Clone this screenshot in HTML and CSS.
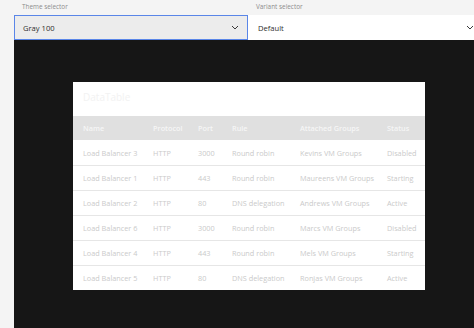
FILE: index.html
```html
<!DOCTYPE html>
<html>
<head>
<meta charset="utf-8">
<link rel="stylesheet" href="styles.css">
</head>
<body>
<div class="controls">
  <div class="field field-theme">
    <label class="label">Theme selector</label>
    <div class="select select-theme">
      <span class="select-value">Gray 100</span>
      <svg class="chev" width="8" height="5" viewBox="0 0 8 5"><path d="M1 1 L4 4 L7 1" fill="none" stroke="#393939" stroke-width="1"/></svg>
    </div>
  </div>
  <div class="field field-variant">
    <label class="label">Variant selector</label>
    <div class="select select-variant">
      <span class="select-value">Default</span>
      <svg class="chev" width="8" height="5" viewBox="0 0 8 5"><path d="M1 1 L4 4 L7 1" fill="none" stroke="#393939" stroke-width="1"/></svg>
    </div>
  </div>
</div>
<div class="stage">
  <div class="card">
    <div class="title">DataTable</div>
    <table class="table">
      <colgroup>
        <col class="c1"><col class="c2"><col class="c3"><col class="c4"><col class="c5"><col class="c6">
      </colgroup>
      <thead>
        <tr><th>Name</th><th>Protocol</th><th>Port</th><th>Rule</th><th>Attached Groups</th><th>Status</th></tr>
      </thead>
      <tbody>
        <tr><td>Load Balancer 3</td><td>HTTP</td><td>3000</td><td>Round robin</td><td>Kevins VM Groups</td><td>Disabled</td></tr>
        <tr><td>Load Balancer 1</td><td>HTTP</td><td>443</td><td>Round robin</td><td>Maureens VM Groups</td><td>Starting</td></tr>
        <tr><td>Load Balancer 2</td><td>HTTP</td><td>80</td><td>DNS delegation</td><td>Andrews VM Groups</td><td>Active</td></tr>
        <tr><td>Load Balancer 6</td><td>HTTP</td><td>3000</td><td>Round robin</td><td>Marcs VM Groups</td><td>Disabled</td></tr>
        <tr><td>Load Balancer 4</td><td>HTTP</td><td>443</td><td>Round robin</td><td>Mels VM Groups</td><td>Starting</td></tr>
        <tr><td>Load Balancer 5</td><td>HTTP</td><td>80</td><td>DNS delegation</td><td>Ronjas VM Groups</td><td>Active</td></tr>
      </tbody>
    </table>
  </div>
</div>
</body>
</html>
```

FILE: styles.css
```css
html, body {
  margin: 0;
  padding: 0;
  background: #f4f4f4;
  font-family: "Open Sans", "Liberation Sans", sans-serif;
  overflow: hidden;
  width: 474px;
  height: 328px;
}

.controls {
  display: flex;
  padding-left: 14px;
}

.field {
  display: flex;
  flex-direction: column;
}

.field-theme {
  width: 234px;
}

.field-variant {
  flex: 1;
}

.label {
  display: block;
  height: 15px;
  line-height: 13px;
  font-size: 6.4px;
  color: #8d8d8d;
  padding-left: 8px;
}

.select {
  height: 25px;
  box-sizing: border-box;
  display: flex;
  align-items: center;
  justify-content: space-between;
  font-size: 7.6px;
  color: #2e2e2e;
}

.select-theme {
  background: #ececec;
  border: 1px solid #5a86e8;
  padding: 0 8px 0 8px;
}

.select-variant {
  background: #ffffff;
  padding: 0 0 0 10px;
}

.chev {
  display: block;
}

.stage {
  margin-left: 14px;
  background: #161616;
  height: 288px;
  padding-top: 42px;
  padding-left: 59px;
  box-sizing: border-box;
}

.card {
  width: 352px;
  background: #ffffff;
}

.title {
  height: 34px;
  line-height: 30px;
  padding-left: 10px;
  font-size: 10px;
  color: #f2f2f2;
}

.table {
  width: 352px;
  border-collapse: collapse;
  table-layout: fixed;
  font-size: 7.3px;
}

.c1 { width: 70px; }
.c2 { width: 45px; }
.c3 { width: 34px; }
.c4 { width: 68px; }
.c5 { width: 87px; }
.c6 { width: 48px; }

.table th {
  background: #e0e0e0;
  color: #f6f6f6;
  font-weight: 600;
  text-align: left;
  height: 24px;
  padding: 0 0 0 10px;
  white-space: nowrap;
}

.table td {
  color: #cacaca;
  height: 24px;
  padding: 0 0 0 10px;
  border-top: 1px solid #e6e6e6;
  white-space: nowrap;
  overflow: hidden;
}

.table tbody tr:first-child td {
  border-top: none;
  height: 25px;
}
```
